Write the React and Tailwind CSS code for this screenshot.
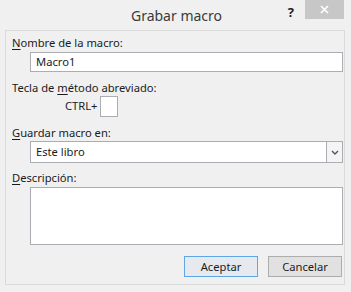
export default function App() {
  const font = { fontFamily: '"Noto Sans", "Open Sans", sans-serif' };
  return (
    <div
      className="w-[351px] h-[292px] bg-[#f0f0f0] text-[11.2px] text-[#1b1b1b] overflow-hidden"
      style={font}
    >
      <div className="relative h-[30px] flex items-center justify-center">
        <span className="text-[14px] text-[#3a3a3a] ml-[2px]">Grabar macro</span>
        <div className="absolute right-[7px] top-0 flex items-start">
          <span className="mt-[3px] mr-[11px] text-[13px] font-bold text-[#222]">?</span>
          <div className="w-[39px] h-[19px] bg-[#c7c7c7] flex items-center justify-center">
            <svg width="9" height="9" viewBox="0 0 9 9">
              <path d="M1 1 L8 8 M8 1 L1 8" stroke="#fff" strokeWidth="1.6" />
            </svg>
          </div>
        </div>
      </div>

      <div className="ml-[5px] w-[340px] h-[255px] border border-[#dadada] pl-[6px] pr-[1px] pt-[4px] flex flex-col">
        <div className="h-[16px] leading-[16px]">
          <span className="underline underline-offset-2">N</span>ombre de la macro:
        </div>
        <div className="ml-[18px] mt-[1px] h-[20px] border border-[#abadb3] bg-white px-[5px] leading-[18px]">
          Macro1
        </div>
        <div className="mt-[8px] h-[16px] leading-[16px]">
          Tecla de <span className="underline underline-offset-2">m</span>étodo abreviado:
        </div>
        <div className="mt-[0px] flex items-center h-[21px] ml-[53px]">
          <span>CTRL+</span>
          <div className="ml-[2px] w-[18px] h-[21px] border border-[#abadb3] bg-white" />
        </div>
        <div className="mt-[8px] h-[16px] leading-[16px]">
          <span className="underline underline-offset-2">G</span>uardar macro en:
        </div>
        <div className="ml-[18px] h-[22px] border border-[#abadb3] bg-white flex">
          <div className="flex-1 px-[5px] leading-[20px]">Este libro</div>
          <div className="w-[16px] border-l border-[#abadb3] bg-[#f4f4f4] flex items-center justify-center">
            <svg width="8" height="5" viewBox="0 0 8 5">
              <path d="M1 1 L4 4 L7 1" stroke="#555" strokeWidth="1.4" fill="none" />
            </svg>
          </div>
        </div>
        <div className="mt-[7px] h-[16px] leading-[16px]">
          <span className="underline underline-offset-2">D</span>escripción:
        </div>
        <div className="ml-[18px] mt-[1px] h-[58px] border border-[#abadb3] bg-white" />
        <div className="mt-[11px] mr-[1px] flex justify-end gap-[10px]">
          <button className="w-[74px] h-[21px] border border-[#5ea6e6] bg-[#e6eaee] leading-[19px]">
            Aceptar
          </button>
          <button className="w-[74px] h-[21px] border border-[#adadad] bg-[#e1e1e1] leading-[19px]">
            Cancelar
          </button>
        </div>
      </div>
    </div>
  );
}
